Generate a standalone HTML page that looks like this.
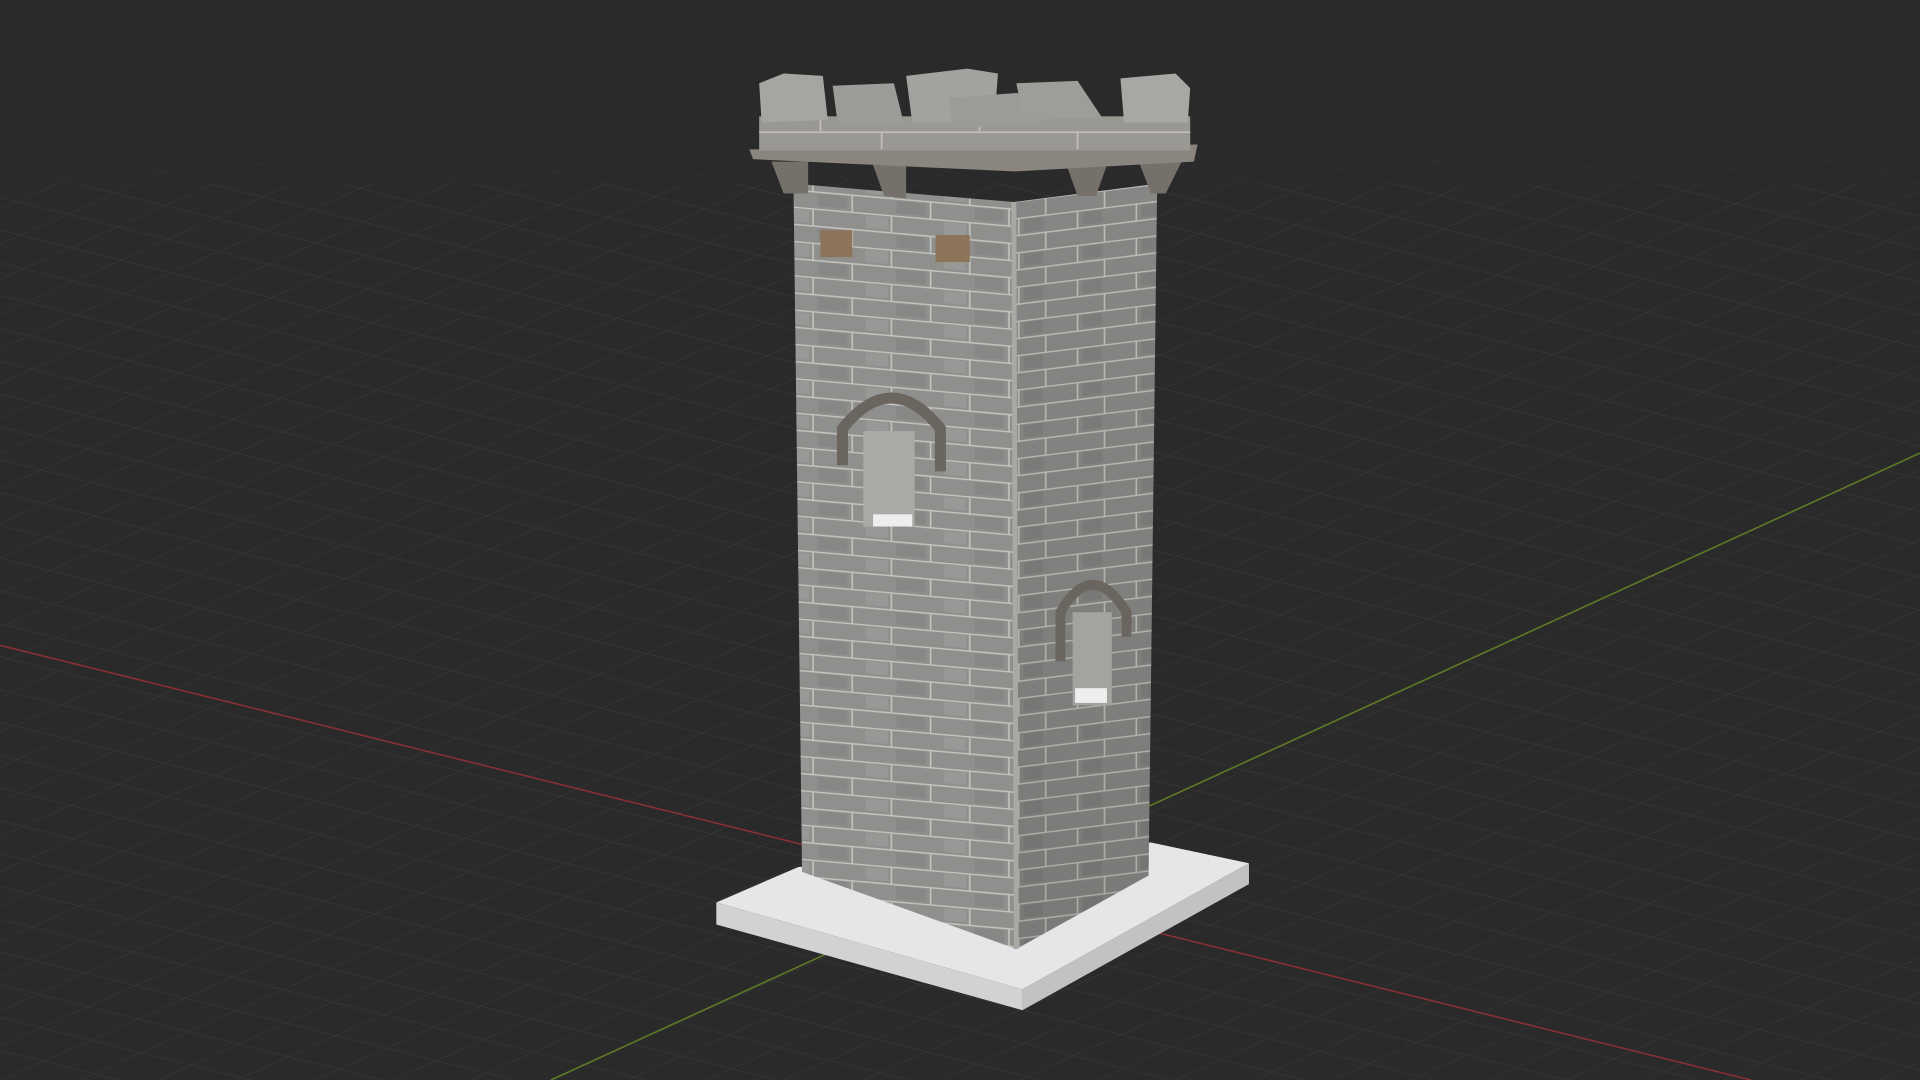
<!DOCTYPE html>
<html><head><meta charset="utf-8"><style>
html,body{margin:0;padding:0;background:#2b2b2b;overflow:hidden}
svg{display:block}
</style></head><body>
<svg width="1920" height="1080" viewBox="0 0 1568 882" preserveAspectRatio="none" xmlns="http://www.w3.org/2000/svg">
<defs>
<pattern id="g1" width="26" height="26" patternUnits="userSpaceOnUse" patternTransform="rotate(14)">
<line x1="0" y1="0" x2="26" y2="0" stroke="#3a3a3a" stroke-width="1"/>
</pattern>
<pattern id="g2" width="26" height="26" patternUnits="userSpaceOnUse" patternTransform="rotate(-24)">
<line x1="0" y1="0" x2="26" y2="0" stroke="#383838" stroke-width="1"/>
</pattern>
<pattern id="bl" width="64" height="28" patternUnits="userSpaceOnUse" patternTransform="skewY(5)">
<rect width="64" height="28" fill="#8f8f8d"/>
<path d="M0 0.5H64M0 14.5H64M24 0V14M56 14V28" stroke="#c4c4c0" stroke-width="1.3"/>
<rect x="3" y="2" width="18" height="10" fill="#989896"/>
<rect x="28" y="16" width="24" height="10" fill="#878785"/>
</pattern>
<pattern id="br" width="48" height="28" patternUnits="userSpaceOnUse" patternTransform="skewY(-7)">
<rect width="48" height="28" fill="#8a8a88"/>
<path d="M0 0.5H48M0 14.5H48M16 0V14M38 14V28" stroke="#c2c2be" stroke-width="1.3"/>
<rect x="20" y="2" width="16" height="10" fill="#828280"/>
</pattern>
<linearGradient id="sh" x1="0" y1="0" x2="0" y2="1">
<stop offset="0" stop-color="#000" stop-opacity="0.03"/>
<stop offset="1" stop-color="#000" stop-opacity="0.12"/>
</linearGradient>
</defs>
<rect width="1568" height="882" fill="#2a2a2a"/>
<rect y="130" width="1568" height="752" fill="url(#g1)" opacity="0.9"/>
<rect y="130" width="1568" height="752" fill="url(#g2)" opacity="0.9"/>
<rect width="1568" height="150" fill="#2b2b2b" opacity="0.6"/>
<line x1="0" y1="527" x2="1430" y2="882" stroke="#8a2f32" stroke-width="1.3"/>
<line x1="1568" y1="370" x2="450" y2="882" stroke="#5f7a25" stroke-width="1.3"/>
<!-- base -->
<polygon points="585,737 652,708 940,688 1020,705 835,808" fill="#e6e6e8"/>
<polygon points="585,737 835,808 835,825 585,755" fill="#d2d2d4"/>
<polygon points="835,808 1020,705 1020,722 835,825" fill="#c2c2c4"/>
<!-- faces -->
<polygon points="648,150 828,165 830,775 655,712" fill="url(#bl)"/>
<polygon points="828,165 945,150 938,715 830,775" fill="url(#br)"/>
<polygon points="828,165 945,150 938,715 830,775" fill="url(#sh)"/>
<line x1="828" y1="165" x2="830" y2="775" stroke="#a8a8a4" stroke-width="4"/>
<!-- windows -->
<path d="M688 380 V350 Q728 300 768 350 V385" fill="none" stroke="#6b6560" stroke-width="9"/>
<rect x="705" y="352" width="42" height="78" fill="#a9a9a6"/>
<rect x="713" y="420" width="32" height="10" fill="#eeeeee"/>
<path d="M866 540 V500 Q892 455 920 500 V520" fill="none" stroke="#6b6560" stroke-width="8"/>
<rect x="876" y="500" width="32" height="76" fill="#a3a3a0"/>
<rect x="878" y="562" width="26" height="12" fill="#eeeeee"/>
<!-- wood blocks -->
<rect x="670" y="188" width="26" height="22" fill="#8d7458"/>
<rect x="764" y="192" width="28" height="22" fill="#8d7458"/>
<!-- corbels and top -->
<polygon points="630,132 660,132 660,158 640,158" fill="#76706b"/>
<polygon points="712,132 740,132 740,162 722,160" fill="#76706b"/>
<polygon points="870,132 905,132 895,160 880,160" fill="#76706b"/>
<polygon points="930,132 965,132 952,158 940,158" fill="#76706b"/>
<polygon points="612,122 978,118 975,132 828,140 615,130" fill="#8b8580"/>
<rect x="620" y="95" width="352" height="28" fill="#999893"/>
<path d="M620 108H972M670 95V108M720 108V122M800 95V108M880 108V122" stroke="#c0bdb8" stroke-width="1.5"/>
<polygon points="620,68 640,60 672,62 676,98 622,100" fill="#a6a5a1"/>
<polygon points="680,70 730,68 738,100 684,100" fill="#9d9c98"/>
<polygon points="740,62 790,56 815,60 812,100 745,100" fill="#a3a29e"/>
<polygon points="775,80 830,76 852,80 850,102 778,104" fill="#9c9b97"/>
<polygon points="830,68 880,66 900,96 836,98" fill="#9e9d99"/>
<polygon points="915,64 960,60 972,72 970,100 918,100" fill="#a8a7a3"/>
</svg>
</body></html>
